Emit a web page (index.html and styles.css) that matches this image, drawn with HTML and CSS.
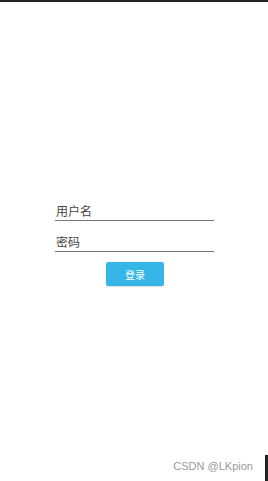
FILE: index.html
```html
<!DOCTYPE html>
<html>
<head>
<meta charset="utf-8">
<link rel="stylesheet" href="styles.css">
</head>
<body>
<div class="topbar"></div>
<main class="page">
  <form class="login">
    <input class="field" type="text" placeholder="用户名">
    <input class="field" type="password" placeholder="密码">
    <button class="btn" type="button">登录</button>
  </form>
</main>
<div class="watermark">CSDN @LKpion</div>
<div class="edge"></div>
</body>
</html>
```
FILE: styles.css
```css
html, body {
  margin: 0;
  padding: 0;
  background: #fff;
  height: 100%;
  overflow: hidden;
}
body {
  font-family: "Noto Sans CJK SC", "Noto Sans", sans-serif;
  position: relative;
}
.topbar {
  height: 2px;
  background: #222;
}
.page {
  padding-top: 199px;
  padding-left: 55px;
}
.login {
  width: 159px;
  display: flex;
  flex-direction: column;
  margin: 0;
}
.field {
  box-sizing: border-box;
  height: 20px;
  margin: 0 0 11px 0;
  padding: 0 0 1px 1px;
  border: none;
  border-bottom: 1px solid #777;
  outline: none;
  font-family: inherit;
  font-size: 12px;
  color: #444;
  background: transparent;
}
.field::placeholder {
  color: #444;
}
.field + .field {
  margin-bottom: 10px;
}
.btn {
  align-self: center;
  width: 58px;
  height: 24px;
  border: none;
  border-radius: 2px;
  background: #35b6e6;
  color: #fff;
  font-family: inherit;
  font-size: 10px;
  box-shadow: 0 1px 1px rgba(0,0,0,0.12);
  padding: 0;
  margin-left: 1px;
}
.watermark {
  position: absolute;
  right: 15px;
  top: 460px;
  font-family: "Liberation Sans", Arial, sans-serif;
  font-size: 11px;
  color: #999;
}
.edge {
  position: absolute;
  right: 0;
  top: 455px;
  width: 3px;
  bottom: 0;
  background: #222;
}
```
